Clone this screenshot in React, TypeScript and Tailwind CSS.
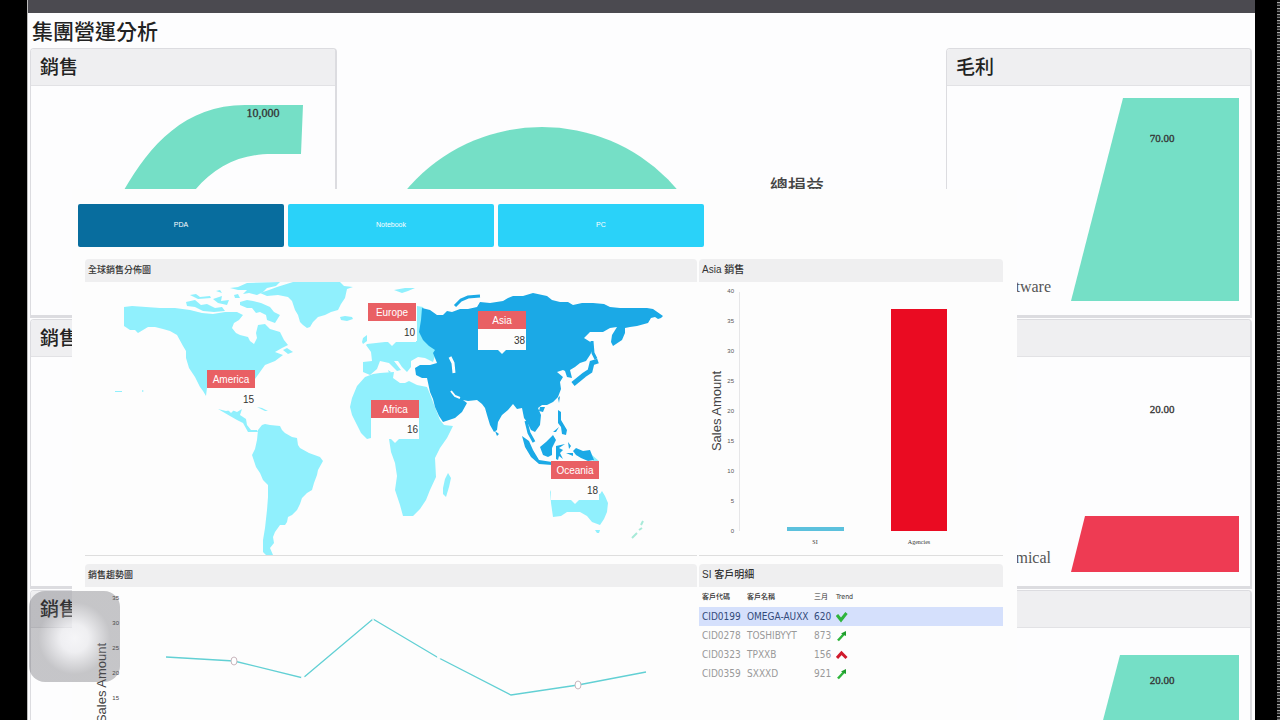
import React from "react";

const SANS = "font-['Liberation_Sans','Noto_Sans_CJK_TC',sans-serif]";

type Pin = { name: string; value: number; x: number; y: number };

const pins: Pin[] = [
  { name: "Europe", value: 10, x: 368, y: 303 },
  { name: "Asia", value: 38, x: 478, y: 311 },
  { name: "America", value: 15, x: 207, y: 370 },
  { name: "Africa", value: 16, x: 371, y: 400 },
  { name: "Oceania", value: 18, x: 551, y: 461 },
];

type Customer = { id: string; name: string; amount: number; trend: "check" | "rise" | "fall" };

const customers: Customer[] = [
  { id: "CID0199", name: "OMEGA-AUXX", amount: 620, trend: "check" },
  { id: "CID0278", name: "TOSHIBYYT", amount: 873, trend: "rise" },
  { id: "CID0323", name: "TPXXB", amount: 156, trend: "fall" },
  { id: "CID0359", name: "SXXXD", amount: 921, trend: "rise" },
];

function Tile({ title, children }: { title?: string; children?: React.ReactNode }) {
  return (
    <section className="flex h-[270px] flex-col overflow-hidden rounded-t border border-r-2 border-b-[3px] border-[#dcdce0] bg-[#fdfdfe]">
      <h2 className="h-[37px] shrink-0 border-b border-[#e2e2e5] bg-[#efeff1] pl-[9px] text-[19px] leading-[38px] font-medium text-[#222]">
        {title}
      </h2>
      <div className="grow">{children}</div>
    </section>
  );
}

function MarginChart({ label, value, points, fill }: { label?: string; value: string; points: string; fill: string }) {
  return (
    <svg viewBox="0 0 303 229" className="block w-full font-['Liberation_Serif',serif]">
      <polygon points={points} fill={fill} />
      <text x="215" y="56" fontSize="11" textAnchor="middle" fill="#333" stroke="#333" strokeWidth="0.3">{value}</text>
      {label && <text x="104" y="206" fontSize="16" textAnchor="end" fill="#555">{label}</text>}
    </svg>
  );
}

function Panel({ title, titleClass, children }: { title: string; titleClass: string; children: React.ReactNode }) {
  return (
    <section className="overflow-hidden rounded-t border-b border-[#dedede] bg-[#fdfdfd]">
      <h3 className={"h-[23px] bg-[#efeff0] pl-[3px] leading-[22px] font-medium text-[#333] " + titleClass}>{title}</h3>
      {children}
    </section>
  );
}

function WorldMap() {
  return (
    <svg viewBox="85 282 612 273" className="block w-full">
      <g fill="#90f0fd">
        <path d="M124 307L132 306L146 307L160 308L175 308L190 310L202 313L213 314L225 312L237 312L243 315L239 320L234 323L232 328L236 333L240 335L248 337L250 341L254 344L257 338L256 333L258 325L265 324L270 329L280 332L284 340L288 345L282 348L275 352L283 355L275 361L265 365L260 372L255 379L253 388L207 388L206 396L203 391L200 387L195 377L189 368L186 358L186 351L183 346L177 335L170 331L163 329L155 327L148 327L143 330L138 333L135 330L130 330L124 326Z" />
        <path d="M186 302L195 300L201 305L207 304L215 308L222 307L225 311L214 312L203 311L195 307L187 306Z" />
        <path d="M240 302L247 300L253 301L261 303L270 307L274 312L280 315L275 323L267 320L266 315L260 312L256 313L252 308L247 308L240 305Z" />
        <path d="M230 288L238 287L247 283L280 282L276 286L267 288L263 292L257 295L249 293L243 294L247 290L238 290Z" />
        <path d="M190 295L196 294L200 297L210 296L211 298L198 299ZM216 291L220 290L222 293ZM213 299L222 296L221 301L229 300L227 305L218 303ZM234 295L238 294L240 298L235 298Z" />
        <path d="M260 293L269 290L277 287L293 282L340 282L344 286L353 287L347 289L345 298L341 304L338 310L331 312L325 315L318 317L313 322L310 327L307 328L303 325L300 322L298 315L295 310L292 301L288 297L278 295L267 296Z" />
        <path d="M340 317L345 316L352 317L353 319L347 321L341 320ZM283 350L287 348L293 352L288 354Z" />
        <path d="M218 409L226 411L232 410L237 412L242 409L240 415L246 419L247 425L251 430L257 430L258 432L248 432L243 423L237 420L230 416Z" />
        <path d="M257 407L262 408L268 411L265 411ZM115 391L122 391L122 392L115 392ZM142 390L144 391L142 392Z" />
        <path d="M258 430L262 425L265 424L270 425L280 426L282 430L285 433L292 437L297 438L298 445L300 448L309 453L320 457L323 461L318 470L317 475L314 483L312 490L307 493L302 498L300 504L297 510L292 515L288 517L287 522L285 525L280 525L275 532L273 537L274 543L270 548L273 555L266 555L263 552L263 540L265 528L267 510L268 497L268 485L263 480L260 473L256 467L252 455L255 449L257 440Z" />
        <path d="M367 344L385 342L417 341L417 306L423 307L430 325L437 350L433 362L425 358L418 357L411 361L411 367L407 372L402 367L398 361L394 361L401 370L397 371L389 363L380 361L377 369L370 375L363 372L363 362L372 361L371 352L366 345Z" />
        <path d="M394 290L405 288L415 288L408 291L402 293ZM362 342L363 338L367 335L367 341L363 344ZM388 370L391 372L389 373Z" />
        <path d="M365 377L373 374L380 373L394 372L393 378L400 383L405 383L409 381L417 385L427 387L430 394L433 402L440 420L444 425L453 426L447 438L440 448L435 458L436 477L430 490L426 500L420 509L413 516L403 516L400 505L395 490L397 476L395 463L391 452L389 439L380 435L371 438L367 439L361 433L357 425L352 415L350 407L352 398L357 386Z" />
        <path d="M448 473L451 478L449 487L446 497L443 494L443 488L445 479Z" />
        <path d="M550 490L552 494L560 490L600 494L602 491L605 496L608 503L607 512L604 519L600 525L592 522L587 516L580 512L567 512L561 516L553 517L551 503ZM595 530L600 530L599 533L597 533ZM592 455L599 461L593 461Z" />
      </g>
      <path d="M643 521L641 525M642 528L639 530M637 533L632 538" stroke="#a8ead8" strokeWidth="2" fill="none" />
      <g fill="#1ba9e6">
        <path d="M422 308L426 309L430 310L437 315L443 315L447 311L452 312L460 309L468 309L477 307L480 302L490 303L503 301L508 298L513 296L523 296L533 293L547 296L552 300L560 302L568 302L573 305L582 303L593 303L604 304L610 307L620 308L634 308L647 308L653 309L663 316L661 318L658 319L655 317L651 318L648 323L637 326L630 327L625 328L625 333L622 340L613 346L611 342L612 335L617 327L610 328L603 332L590 332L584 338L592 343L593 349L590 355L586 361L580 363L575 367L570 370L572 378L567 377L565 371L563 370L557 372L563 377L560 382L561 389L558 397L553 402L547 405L542 405L538 408L541 415L540 425L535 432L531 430L527 422L524 418L522 408L517 409L513 404L508 410L502 415L498 422L497 430L494 432L490 425L487 415L485 408L482 404L477 400L468 401L463 400L467 403L462 412L455 418L443 422L439 416L435 407L433 399L430 392L427 378L422 378L416 375L415 368L420 365L430 365L437 363L433 353L435 350L429 346L423 340L419 332L421 320Z" />
        <path d="M540 447L546 442L553 435L556 440L552 448L552 455L548 457L543 455ZM556 446L565 444L559 448L563 450L560 453L563 459L559 456L558 460L556 459ZM558 410L561 412L561 420L567 430L566 435L562 434L561 427L558 423ZM573 451L576 448L583 451L590 450L594 460L588 461L581 458L576 455ZM568 442L571 446L569 449ZM566 453L573 453L573 456ZM495 431L499 434L497 436ZM558 398L560 396L559 403ZM540 407L545 407L543 412L539 411ZM559 427L553 432L556 432Z" />
        <path d="M522 436L529 441L533 450L539 460L552 462L552 465L539 464L531 457L525 447Z" />
        <path d="M592 341L593 353L596 359" fill="none" stroke="#1ba9e6" strokeWidth="3" />
        <path d="M598 361L592 363L590 371L584 375L573 384" fill="none" stroke="#1ba9e6" strokeWidth="5" />
        <path d="M526 421L529 433L534 442" fill="none" stroke="#1ba9e6" strokeWidth="3" />
        <path d="M455 306L461 300L468 297L480 296" fill="none" stroke="#1ba9e6" strokeWidth="3" />
      </g>
      <g fill="none" stroke="#fdfdfd" strokeWidth="3">
        <path d="M450 357L453 363L454 373" />
        <path d="M451 391L455 396L460 398" strokeWidth="2" />
      </g>
      {pins.map((p) => (
        <g key={p.name}>
          <path d={`M${p.x} ${p.y + 18}h48v21h-20l-4 4l-4 -4h-20z`} fill="#fdfdfd" />
          <rect x={p.x} y={p.y} width="48" height="18" fill="#e96064" />
          <text x={p.x + 24} y={p.y + 13} fontSize="10" textAnchor="middle" fill="#fff">{p.name}</text>
          <text x={p.x + 47} y={p.y + 33} fontSize="10" textAnchor="end" fill="#333">{p.value}</text>
        </g>
      ))}
    </svg>
  );
}

function BarChart() {
  const ticks = [40, 35, 30, 25, 20, 15, 10, 5, 0];
  return (
    <svg viewBox="699 282 304 273" className="block w-full">
      <path d="M739.5 292V531" stroke="#e6e6e8" />
      {ticks.map((t, i) => (
        <text key={t} x="734" y={293 + i * 30} fontSize="6" textAnchor="end" fill="#555">{t}</text>
      ))}
      <text transform="translate(721 411) rotate(-90)" fontSize="13" textAnchor="middle" fill="#444">Sales Amount</text>
      <rect x="787" y="527" width="57" height="4" fill="#5cc1dd" />
      <rect x="891" y="309" width="56" height="222" fill="#ea0b22" />
      <g className="font-['Liberation_Serif',serif]" fontSize="6" textAnchor="middle" fill="#333">
        <text x="815" y="544">SI</text>
        <text x="919" y="544">Agencies</text>
      </g>
    </svg>
  );
}

function TrendChart() {
  const ticks = [35, 30, 25, 20, 15];
  return (
    <svg viewBox="85 587 612 160" className="block w-full">
      {ticks.map((t, i) => (
        <text key={t} x="119" y={600 + i * 25} fontSize="6" textAnchor="end" fill="#444">{t}</text>
      ))}
      <text transform="translate(106 683) rotate(-90)" fontSize="13" textAnchor="middle" fill="#444">Sales Amount</text>
      <polyline points="166,657 234,661 303,678 373,619 437,657 511,695 578,685 646,672" fill="none" stroke="#62d0d4" strokeWidth="1.3" />
      <g fill="#fdfdfd">
        <circle cx="303" cy="678" r="2" />
        <circle cx="373" cy="619" r="1" />
        <circle cx="439" cy="657" r="2" />
      </g>
      <g fill="#fff" stroke="#c9b6bd">
        <ellipse cx="234" cy="661" rx="3" ry="4" />
        <ellipse cx="578" cy="685" rx="3" ry="4" />
      </g>
    </svg>
  );
}

function TrendIcon({ kind }: { kind: Customer["trend"] }) {
  return (
    <svg viewBox="0 0 12 12" className="block size-3" fill="none" strokeWidth="3">
      {kind === "check" && <path d="M1 4L5 9L10.5 2" stroke="#2fb53c" />}
      {kind === "rise" && (
        <>
          <path d="M2 10.5L8 4" stroke="#2fb53c" strokeWidth="2.5" />
          <path d="M10 1L10 6L5 3.5Z" fill="#1f9d2c" />
        </>
      )}
      {kind === "fall" && <path d="M1 9L5.500 4L10.5 9" stroke="#d01a2c" />}
    </svg>
  );
}

function CustomerTable() {
  return (
    <table className="w-full table-fixed border-collapse text-left font-['DejaVu_Sans_Condensed','DejaVu_Sans','Noto_Sans_CJK_TC',sans-serif]">
      <colgroup>
        <col className="w-[48px]" />
        <col className="w-[67px]" />
        <col className="w-[22px]" />
        <col />
      </colgroup>
      <thead className="h-[20px] text-[7px] text-[#333]">
        <tr>
          <th className="p-0 pl-[3px] font-medium">客戶代碼</th>
          <th className="p-0 font-medium">客戶名稱</th>
          <th className="p-0 font-normal">三月</th>
          <th className="p-0 font-normal">Trend</th>
        </tr>
      </thead>
      <tbody className="text-[10px] leading-[19px] whitespace-nowrap">
        {customers.map((c, i) => (
          <tr key={c.id} className={i === 0 ? "h-[19px] bg-[#d5e0fc] text-[#334a7a]" : "h-[19px] text-[#999]"}>
            <td className="p-0 pl-[3px]">{c.id}</td>
            <td className="p-0">{c.name}</td>
            <td className="p-0">{c.amount}</td>
            <td className="p-0"><TrendIcon kind={c.trend} /></td>
          </tr>
        ))}
      </tbody>
    </table>
  );
}

export default function App() {
  const [tab, setTab] = React.useState("PDA");
  return (
    <div className={"flex h-screen bg-black " + SANS}>
      <main className="relative ml-[27px] flex grow flex-col overflow-hidden border-l border-[#bbb] bg-[#fdfdfe]">
        <div className="h-[13px] shrink-0 bg-[#4b4a50]" />
        <h1 className="h-[35px] shrink-0 pl-[4px] text-[21px] leading-[37px] font-medium text-[#222]">集團營運分析</h1>
        <div className="grid grid-cols-[307fr_609fr_306fr] items-start pr-[3px] pl-[2px]">
          <div className="grid gap-px">
            <Tile title="銷售">
              <svg viewBox="31 86 304 229" className="block w-full">
                <path d="M124 190C150 145 185 105 245 105H303L301 154H272C240 154 216 166 195 190Z" fill="#75dfc6" />
                <text x="263" y="117" fontSize="12" textAnchor="middle" fill="#333" stroke="#333" strokeWidth="0.3" className="font-['Liberation_Serif',serif]">10,000</text>
              </svg>
            </Tile>
            <Tile title="銷售" />
            <Tile title="銷售" />
          </div>
          <svg viewBox="337 48 609 300" className="block w-full">
            <circle cx="542" cy="305" r="178" fill="#75dfc6" />
            <text x="770" y="193" fontSize="18" fontWeight="500" fill="#444">總損益</text>
          </svg>
          <div className="grid gap-px">
            <Tile title="毛利">
              <MarginChart label="Software" value="70.00" points="176,12 292,12 292,215 124,215" fill="#75dfc6" />
            </Tile>
            <Tile>
              <MarginChart label="Chemical" value="20.00" points="138,159 292,159 292,215 124,215" fill="#ee3b53" />
            </Tile>
            <Tile>
              <MarginChart value="20.00" points="173,27 292,27 292,215 124,215" fill="#75dfc6" />
            </Tile>
          </div>
        </div>

        <div role="dialog" aria-label="銷售" className="absolute top-[189px] right-[238px] bottom-0 left-[44px] overflow-hidden bg-[#fdfdfd] pt-[15px]">
          <div className="pl-[6px]">
            <div className="grid w-2/3 grid-cols-3 gap-1">
              {["PDA", "Notebook", "PC"].map((name) => (
                <button
                  key={name}
                  type="button"
                  onClick={() => setTab(name)}
                  className={(tab === name ? "bg-[#086d9e]" : "bg-[#2ad2f9]") + " h-[43px] rounded-xs text-[7px] text-white"}
                >
                  {name}
                </button>
              ))}
            </div>
          </div>
          <div className="mt-[12px] grid grid-cols-[612fr_304fr] gap-x-[2px] gap-y-[8px] pr-[14px] pl-[13px]">
            <Panel title="全球銷售分佈圖" titleClass="text-[9px]">
              <WorldMap />
            </Panel>
            <Panel title="Asia 銷售" titleClass="text-[10px]">
              <BarChart />
            </Panel>
            <Panel title="銷售趨勢圖" titleClass="text-[9px]">
              <TrendChart />
            </Panel>
            <Panel title="SI 客戶明細" titleClass="text-[10px]">
              <CustomerTable />
            </Panel>
          </div>
        </div>

        <button
          type="button"
          aria-label="Menu"
          className="absolute bottom-[38px] left-px size-[91px] rounded-2xl bg-[radial-gradient(circle_at_50%_52%,rgba(240,240,244,0.6)_0,rgba(225,225,230,0.5)_14px,rgba(80,80,88,0.32)_36px)]"
        />
      </main>
      <div className="flex w-[25px] shrink-0 justify-end">
        <div className="w-[3px] bg-[repeating-linear-gradient(#111_0_2px,#aaa_2px_3px,#333_3px_5px,#777_5px_6px)]" />
      </div>
    </div>
  );
}
